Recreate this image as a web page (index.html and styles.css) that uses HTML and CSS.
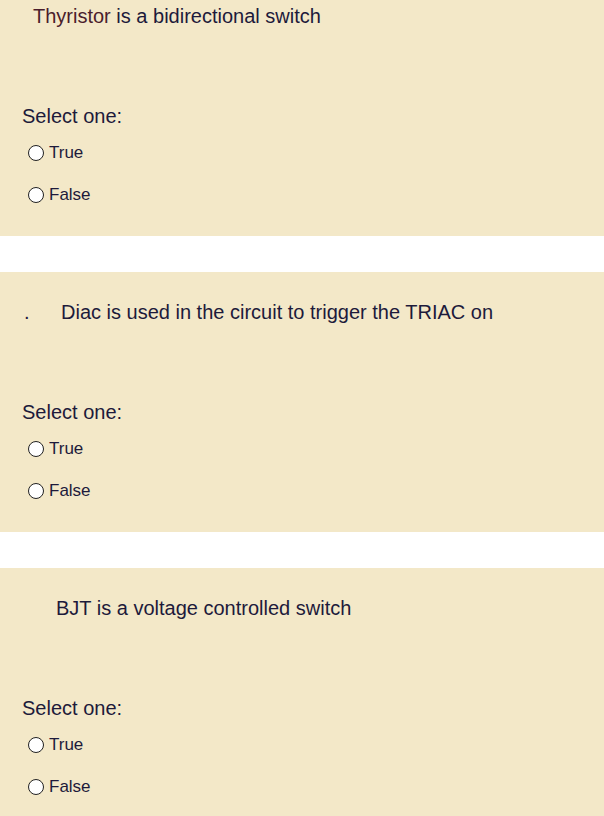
FILE: index.html
```html
<!DOCTYPE html>
<html lang="en">
<head>
  <meta charset="UTF-8">
  <meta name="viewport" content="width=device-width, initial-scale=1.0">
  <title>Quiz</title>
  <link rel="stylesheet" href="styles.css">
</head>
<body>
  <div class="quiz">
    <!-- Question 1 -->
    <div class="que">
      <div class="qtext q1"><span class="term">Thyristor</span> is a bidirectional switch</div>
      <div class="prompt">Select one:</div>
      <label class="answer"><input type="radio" name="q1"> True</label>
      <label class="answer"><input type="radio" name="q1"> False</label>
    </div>

    <!-- Question 2 -->
    <div class="que">
      <div class="qtext q2"><span class="dot">.</span>Diac is used in the circuit to trigger the TRIAC on</div>
      <div class="prompt">Select one:</div>
      <label class="answer"><input type="radio" name="q2"> True</label>
      <label class="answer"><input type="radio" name="q2"> False</label>
    </div>

    <!-- Question 3 -->
    <div class="que">
      <div class="qtext q3">BJT is a voltage controlled switch</div>
      <div class="prompt">Select one:</div>
      <label class="answer"><input type="radio" name="q3"> True</label>
      <label class="answer"><input type="radio" name="q3"> False</label>
    </div>
  </div>
</body>
</html>
```

FILE: styles.css
```css
body {
  margin: 0;
  background: #ffffff;
  font-family: "Liberation Sans", Arial, sans-serif;
  color: #1d1a3b;
}

.quiz {
  margin-top: -24px;
  display: flex;
  flex-direction: column;
  gap: 36px;
}

.que {
  background: #f3e8c8;
  padding: 29px 22px 20px;
  display: flex;
  flex-direction: column;
}

.qtext {
  font-size: 20px;
  line-height: 23px;
  margin-bottom: 77px;
}

.q1 {
  padding-left: 11px;
}

.q2 {
  padding-left: 2px;
}

.q3 {
  padding-left: 34px;
}

.term {
  color: #4a1d2c;
}

.dot {
  display: inline-block;
  width: 37px;
}

.prompt {
  font-size: 20px;
  line-height: 23px;
  margin-bottom: 4px;
}

.answer {
  display: flex;
  align-items: center;
  height: 42px;
  font-size: 17px;
  padding-left: 6px;
}

.answer input {
  appearance: none;
  -webkit-appearance: none;
  width: 16px;
  height: 16px;
  margin: 0 5px 0 0;
  border: 1px solid #222222;
  border-radius: 50%;
  background: #ffffff;
}
```
